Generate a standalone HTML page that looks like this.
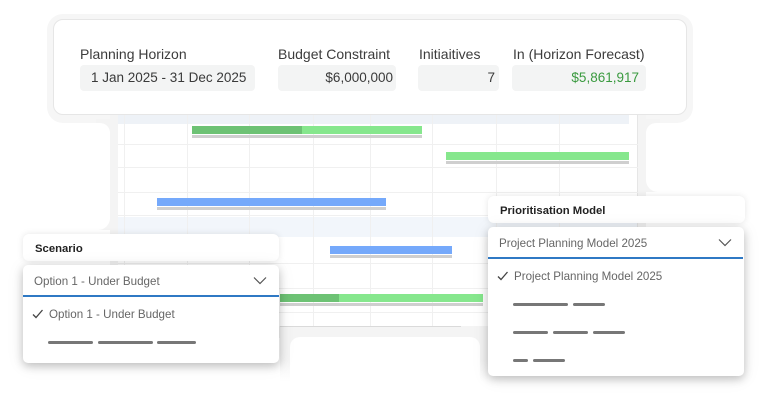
<!DOCTYPE html>
<html><head><meta charset="utf-8">
<style>
html,body{margin:0;padding:0;background:#fff}
#p{position:relative;width:768px;height:417px;overflow:hidden;background:#fff;font-family:"Liberation Sans",sans-serif;color:#333}
#p div{position:absolute;box-sizing:border-box}
.v{top:114px;width:1px;height:212px;background:#f0f0f0}
.h{left:118px;width:520px;height:1px;background:#f0f0f0}
.lb{top:45px;font-size:14px;line-height:18px;color:#3c3c3c;white-space:nowrap}
.chip{top:65px;height:26px;background:#f3f4f4;border-radius:4px;font-size:13.500px;line-height:26px;color:#3a3a3a;white-space:nowrap}
.g{background:#86e78d}.dg{background:#6dc274}.b{background:#75a9fb}.sh{background:#cfcfcf}
.title{background:#fff;border-radius:6px;font-weight:bold;font-size:11.300px;line-height:30px;color:#222;box-shadow:0 0 7px rgba(0,0,0,.1)}
.card{background:#fff;border-radius:5px;box-shadow:0 3px 9px rgba(0,0,0,.22),0 2px 18px rgba(0,0,0,.08)}
.t{font-size:11.600px;color:#666;white-space:nowrap;line-height:16px}
.d{height:3px;background:#777;border-radius:2px}
.line{height:2px;background:#2f79c4}
.cg{background:#f4f4f4;width:14px;height:14px}
.cw{background:#fff;width:14px;height:14px}
</style></head><body>
<div id="p">
  <!-- top card halo -->
  <div style="left:47px;top:14px;width:646px;height:109px;background:#f6f6f6;border-radius:16px"></div>
  <!-- grid background -->
  <div style="left:110px;top:110px;width:536px;height:228px;background:#f4f4f4"></div>
  <!-- halo curves -->
  <div class="cg" style="left:96px;top:119px"></div><div class="cw" style="left:96px;top:123px;height:10px;border-top-right-radius:10px"></div>
  <div class="cg" style="left:646px;top:119px"></div><div class="cw" style="left:646px;top:123px;height:10px;border-top-left-radius:10px"></div>
  <div class="cg" style="left:96px;top:216px"></div><div class="cw" style="left:96px;top:216px;border-bottom-right-radius:12px"></div>
  <div class="cg" style="left:646px;top:178px"></div><div class="cw" style="left:646px;top:178px;border-bottom-left-radius:12px"></div>
  <div style="left:118px;top:112px;width:520px;height:214px;background:#fff"></div>
  <div style="left:280px;top:326px;width:181px;height:1px;background:#dadada"></div>
  <div style="left:118px;top:114px;width:511px;height:10px;background:#eef2f7"></div>
  <div style="left:118px;top:217px;width:520px;height:20px;background:#f2f6fb"></div>
  <div class="v" style="left:124px"></div><div class="v" style="left:187px"></div><div class="v" style="left:249px"></div><div class="v" style="left:313px"></div><div class="v" style="left:370px"></div><div class="v" style="left:432px"></div><div class="v" style="left:496px"></div><div class="v" style="left:559px"></div>
  <div style="left:637px;top:114px;width:1px;height:212px;background:#e6e6e6"></div>
  <div class="h" style="top:144px"></div><div class="h" style="top:167px"></div><div class="h" style="top:192px"></div><div class="h" style="top:215px"></div><div class="h" style="top:263px"></div><div class="h" style="top:288px"></div><div class="h" style="top:312px"></div>
  <!-- bars -->
  <div class="g" style="left:192px;top:126px;width:230px;height:8px"></div>
  <div class="dg" style="left:192px;top:126px;width:110px;height:8px"></div>
  <div class="sh" style="left:192px;top:135px;width:230px;height:3px"></div>
  <div class="g" style="left:446px;top:152px;width:183px;height:8px"></div>
  <div class="sh" style="left:446px;top:161px;width:183px;height:3px"></div>
  <div class="b" style="left:157px;top:198px;width:229px;height:8px"></div>
  <div class="sh" style="left:157px;top:207px;width:229px;height:3px"></div>
  <div class="b" style="left:330px;top:246px;width:122px;height:8px"></div>
  <div class="sh" style="left:330px;top:255px;width:122px;height:3px"></div>
  <div class="g" style="left:280px;top:294px;width:203px;height:8px"></div>
  <div class="dg" style="left:280px;top:294px;width:59px;height:8px"></div>
  <div class="sh" style="left:280px;top:303px;width:203px;height:3px"></div>
  <!-- bottom white notch -->
  <div style="left:280px;top:327px;width:208px;height:55px;background:linear-gradient(#f4f4f4 0,#f4f4f4 60%,#fff 100%)"></div>
  <div style="left:290px;top:337px;width:190px;height:60px;background:#fff;border-radius:10px 10px 0 0"></div>
  <!-- top card -->
  <div style="left:53px;top:19px;width:634px;height:96px;background:#fff;border:1px solid #e6e6e6;border-radius:10px"></div>
  <div class="lb" style="left:80px">Planning Horizon</div>
  <div class="lb" style="left:278px">Budget Constraint</div>
  <div class="lb" style="left:419px">Initiaitives</div>
  <div class="lb" style="left:513px">In (Horizon Forecast)</div>
  <div class="chip" style="left:80px;width:175px;padding-left:11px">1 Jan 2025 - 31 Dec 2025</div>
  <div class="chip" style="left:278px;width:118px;text-align:right;padding-right:3px">$6,000,000</div>
  <div class="chip" style="left:418px;width:81px;text-align:right;padding-right:4px">7</div>
  <div class="chip" style="left:512px;width:134px;text-align:right;padding-right:7px;color:#3a9a3f">$5,861,917</div>
  <!-- scenario -->
  <div class="title" style="left:23px;top:234px;width:256px;height:27px;padding-left:12px">Scenario</div>
  <div class="card" style="left:23px;top:265px;width:256px;height:98px"></div>
  <div class="t" style="left:34px;top:274px">Option 1 - Under Budget</div>
  <svg style="position:absolute;left:253px;top:276px" width="14" height="9" viewBox="0 0 14 9"><path d="M1 1.500L7 7.500L13 1.500" fill="none" stroke="#555" stroke-width="1.200"/></svg>
  <div class="line" style="left:23px;top:295px;width:256px"></div>
  <svg style="position:absolute;left:32px;top:309px" width="12" height="10" viewBox="0 0 12 10"><path d="M1 5.500L4 8.500L10.500 1" fill="none" stroke="#444" stroke-width="1.300"/></svg>
  <div class="t" style="left:49px;top:307px">Option 1 - Under Budget</div>
  <div class="d" style="left:48px;top:341px;width:45px"></div><div class="d" style="left:98px;top:341px;width:55px"></div><div class="d" style="left:157px;top:341px;width:39px"></div>
  <!-- prioritisation -->
  <div class="title" style="left:488px;top:196px;width:257px;height:27px;padding-left:12px">Prioritisation Model</div>
  <div class="card" style="left:488px;top:227px;width:256px;height:149px"></div>
  <div class="t" style="left:499px;top:236px">Project Planning Model 2025</div>
  <svg style="position:absolute;left:718px;top:238px" width="14" height="9" viewBox="0 0 14 9"><path d="M1 1.500L7 7.500L13 1.500" fill="none" stroke="#555" stroke-width="1.200"/></svg>
  <div class="line" style="left:488px;top:257px;width:255px"></div>
  <svg style="position:absolute;left:497px;top:271px" width="12" height="10" viewBox="0 0 12 10"><path d="M1 5.500L4 8.500L10.500 1" fill="none" stroke="#444" stroke-width="1.300"/></svg>
  <div class="t" style="left:514px;top:269px">Project Planning Model 2025</div>
  <div class="d" style="left:513px;top:303px;width:55px"></div><div class="d" style="left:573px;top:303px;width:32px"></div>
  <div class="d" style="left:513px;top:331px;width:35px"></div><div class="d" style="left:553px;top:331px;width:35px"></div><div class="d" style="left:593px;top:331px;width:32px"></div>
  <div class="d" style="left:513px;top:359px;width:15px"></div><div class="d" style="left:533px;top:359px;width:32px"></div>
</div>
</body></html>
